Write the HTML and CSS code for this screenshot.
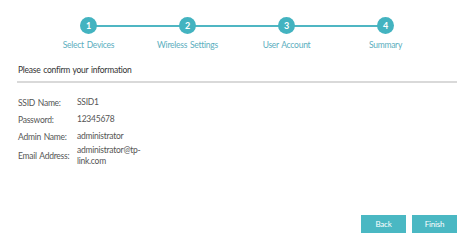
FILE: index.html
```html
<!doctype html>
<html lang="en">
<head>
	<meta charset="UTF-8">
	<title>Quick Setup - Summary</title>
	<link rel="stylesheet" href="styles.css">
</head>
<body>
	<div id="wizard">
		<div class="steps">
			<div class="step"><span class="num">1</span><span class="name">Select Devices</span></div>
			<div class="step"><span class="num">2</span><span class="name">Wireless Settings</span></div>
			<div class="step"><span class="num">3</span><span class="name">User Account</span></div>
			<div class="step"><span class="num">4</span><span class="name">Summary</span></div>
		</div>
		<div class="content">
			<div class="title">Please confirm your information</div>
			<div class="info">
				<div class="row"><span class="label">SSID Name:</span><span class="value">SSID1</span></div>
				<div class="row"><span class="label">Password:</span><span class="value">12345678</span></div>
				<div class="row"><span class="label">Admin Name:</span><span class="value">administrator</span></div>
				<div class="row"><span class="label">Email Address:</span><span class="value">administrator@tp-link.com</span></div>
			</div>
			<div class="buttons">
				<button class="btn">Back</button>
				<button class="btn">Finish</button>
			</div>
		</div>
	</div>
</body>
</html>
```

FILE: styles.css
```css
body{
	margin: 0;
	font-family: "Lato", "Open Sans", sans-serif;
	background: #fff;
	letter-spacing: -0.25px;
	word-spacing: 0.8px;
}
#wizard{
	width: 474px;
	height: 244px;
}
.steps{
	display: flex;
	justify-content: center;
	padding-top: 17px;
}
.step{
	position: relative;
	width: 99px;
	display: flex;
	flex-direction: column;
	align-items: center;
}
.step:not(:last-child)::before{/* 连接线 */
	content: "";
	position: absolute;
	left: 50%;
	width: 100%;
	top: 8px;
	height: 2px;
	background: #4fb6c3;
}
.num{
	position: relative;
	width: 17px;
	height: 17px;
	line-height: 17px;
	border-radius: 50%;
	background: #43b3c0;
	color: #fff;
	font-size: 9px;
	font-weight: bold;
	text-align: center;
	letter-spacing: 0;
}
.name{
	margin-top: 6px;
	font-size: 8.5px;
	line-height: 11px;
	color: #5aaebe;
	white-space: nowrap;
}
.content{
	margin: 0 17px 0 17px;
}
.title{
	margin-top: 14px;
	padding: 0 0 5px 1px;
	font-size: 8.5px;
	line-height: 11px;
	color: #333;
	border-bottom: 2px solid #d9d9d9;
}
.info{
	padding: 11px 0 0 1px;
}
.row{
	display: flex;
	align-items: center;
	min-height: 17px;
	font-size: 8.5px;
	color: #555;
}
.label{
	width: 59px;
}
.value{
	width: 60px;
	line-height: 11px;
}
.buttons{
	display: flex;
	justify-content: flex-end;
	gap: 6px;
	margin-top: 48px;
}
.btn{
	width: 45px;
	height: 18px;
	border: none;
	background: #4ab8c3;
	color: #fff;
	font-family: inherit;
	font-size: 8px;
	letter-spacing: -0.2px;
	padding: 0;
}
```
